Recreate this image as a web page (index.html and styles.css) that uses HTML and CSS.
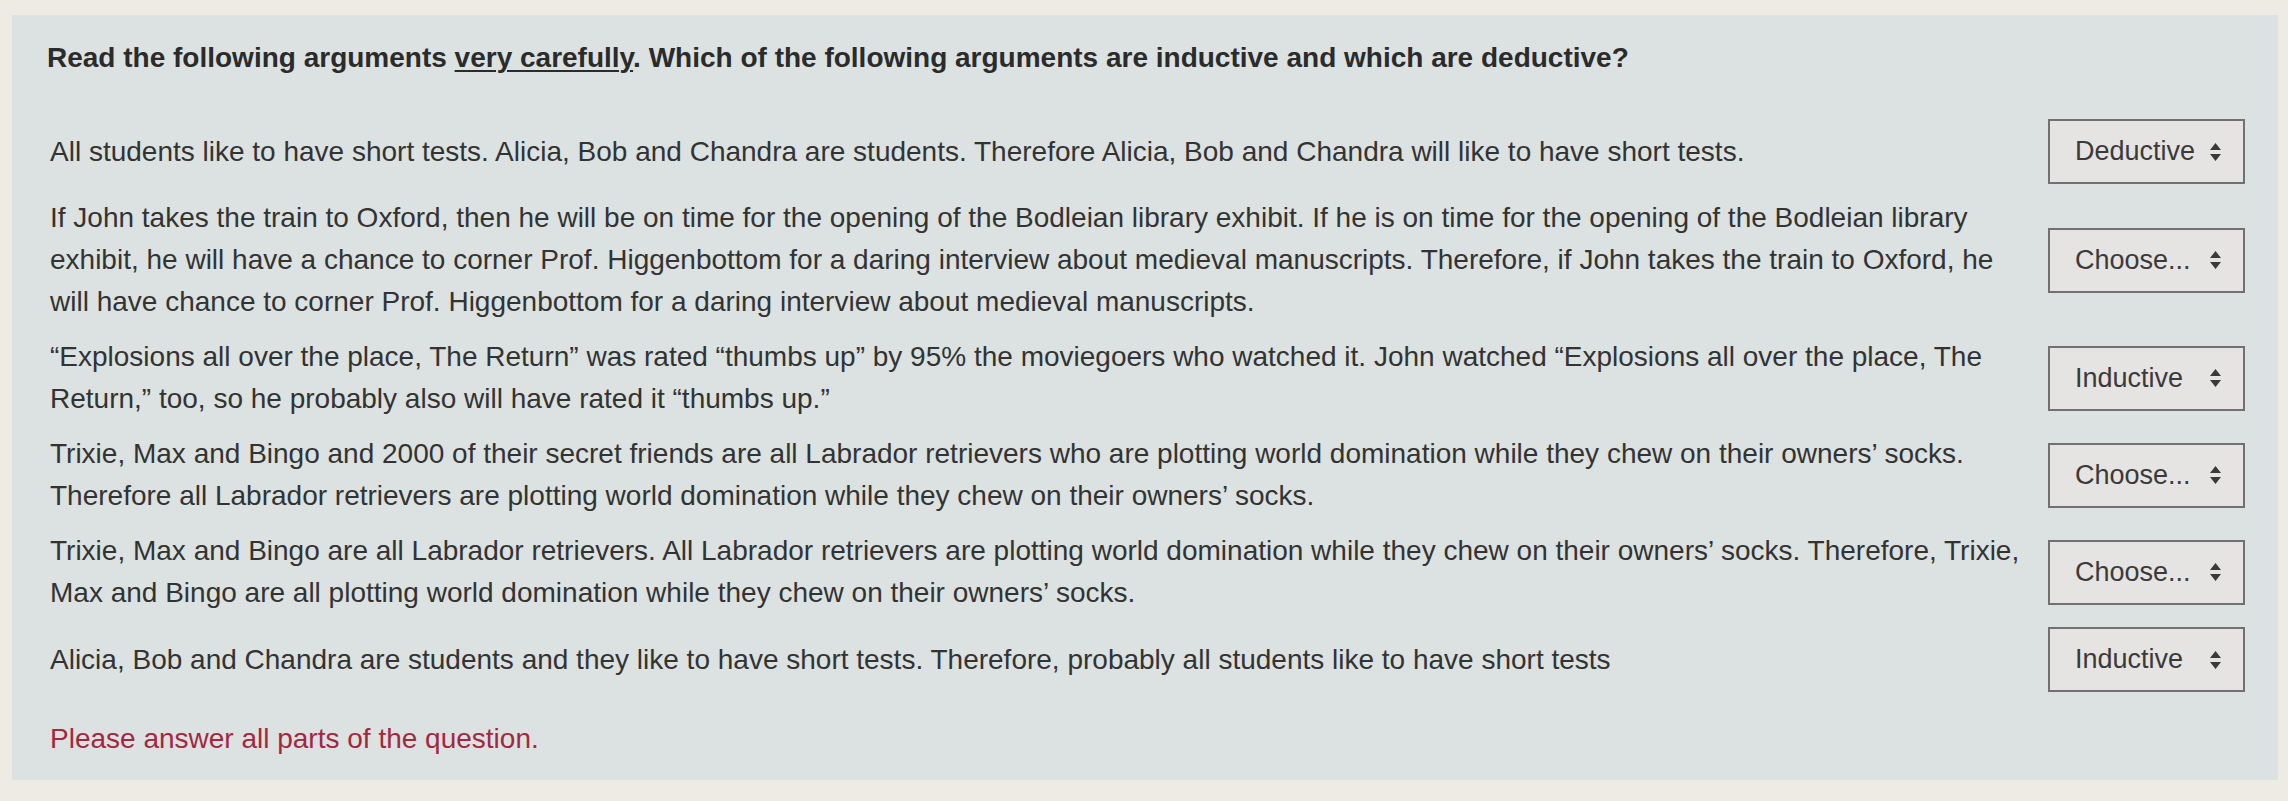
FILE: index.html
```html
<!DOCTYPE html>
<html>
    <head>
        <title>Arguments</title>
        <link rel="stylesheet" href="styles.css">
    </head>
    <body>
        <div class="panel">
            <div class="question">
                Read the following arguments <u>very carefully</u>. Which of the following arguments are inductive and which are deductive?
            </div>

            <div class="rows">
                <div class="row">
                    <div class="arg">All students like to have short tests. Alicia, Bob and Chandra are students. Therefore Alicia, Bob and Chandra will like to have short tests.</div>
                    <div class="choice"><span>Deductive</span><svg class="arrows" viewBox="0 0 11 18"><path d="M5.5 0 L11 7 L0 7 Z M5.5 18 L11 11 L0 11 Z"/></svg></div>
                </div>
                <div class="row">
                    <div class="arg">If John takes the train to Oxford, then he will be on time for the opening of the Bodleian library exhibit. If he is on time for the opening of the Bodleian library exhibit, he will have a chance to corner Prof. Higgenbottom for a daring interview about medieval manuscripts. Therefore, if John takes the train to Oxford, he will have chance to corner Prof. Higgenbottom for a daring interview about medieval manuscripts.</div>
                    <div class="choice"><span>Choose...</span><svg class="arrows" viewBox="0 0 11 18"><path d="M5.5 0 L11 7 L0 7 Z M5.5 18 L11 11 L0 11 Z"/></svg></div>
                </div>
                <div class="row">
                    <div class="arg">“Explosions all over the place, The Return” was rated “thumbs up” by 95% the moviegoers who watched it. John watched “Explosions all over the place, The Return,” too, so he probably also will have rated it “thumbs up.”</div>
                    <div class="choice"><span>Inductive</span><svg class="arrows" viewBox="0 0 11 18"><path d="M5.5 0 L11 7 L0 7 Z M5.5 18 L11 11 L0 11 Z"/></svg></div>
                </div>
                <div class="row">
                    <div class="arg">Trixie, Max and Bingo and 2000 of their secret friends are all Labrador retrievers who are plotting world domination while they chew on their owners’ socks. Therefore all Labrador retrievers are plotting world domination while they chew on their owners’ socks.</div>
                    <div class="choice"><span>Choose...</span><svg class="arrows" viewBox="0 0 11 18"><path d="M5.5 0 L11 7 L0 7 Z M5.5 18 L11 11 L0 11 Z"/></svg></div>
                </div>
                <div class="row">
                    <div class="arg">Trixie, Max and Bingo are all Labrador retrievers. All Labrador retrievers are plotting world domination while they chew on their owners’ socks. Therefore, Trixie, Max and Bingo are all plotting world domination while they chew on their owners’ socks.</div>
                    <div class="choice"><span>Choose...</span><svg class="arrows" viewBox="0 0 11 18"><path d="M5.5 0 L11 7 L0 7 Z M5.5 18 L11 11 L0 11 Z"/></svg></div>
                </div>
                <div class="row">
                    <div class="arg">Alicia, Bob and Chandra are students and they like to have short tests. Therefore, probably all students like to have short tests</div>
                    <div class="choice"><span>Inductive</span><svg class="arrows" viewBox="0 0 11 18"><path d="M5.5 0 L11 7 L0 7 Z M5.5 18 L11 11 L0 11 Z"/></svg></div>
                </div>
            </div>

            <div class="warning">Please answer all parts of the question.</div>
        </div>
    </body>
</html>
```

FILE: styles.css
```css
body {
    margin: 0;
    background: #eeebe5;
    font-family: "Liberation Sans", Arial, sans-serif;
    color: #333;
}
.panel {
    margin: 15px 10px 0 12px;
    padding: 23px 33px 20px 35px;
    background: #dbe2e1;
}
.question {
    font-size: 28px;
    line-height: 40px;
    font-weight: bold;
    color: #2b2b2b;
}
.question u {
    text-decoration-thickness: 2px;
    text-underline-offset: 3px;
}
.rows {
    margin-top: 41px;
    display: flex;
    flex-direction: column;
    gap: 13px;
}
.row {
    display: flex;
    align-items: center;
    gap: 22px;
}
.arg {
    flex: 1;
    font-size: 28px;
    line-height: 42px;
    padding-left: 3px;
}
.choice {
    width: 197px;
    height: 65px;
    box-sizing: border-box;
    display: flex;
    align-items: center;
    justify-content: space-between;
    padding: 0 22px 0 25px;
    background: #e6e3e3;
    border: 2px solid #717173;
    font-size: 27px;
    color: #3a3a3a;
}
.arrows {
    flex-shrink: 0;
    width: 11px;
    height: 18px;
    fill: #3a3a3a;
}
.warning {
    margin-top: 26px;
    padding-left: 3px;
    font-size: 28px;
    line-height: 42px;
    color: #a3283f;
}
```
